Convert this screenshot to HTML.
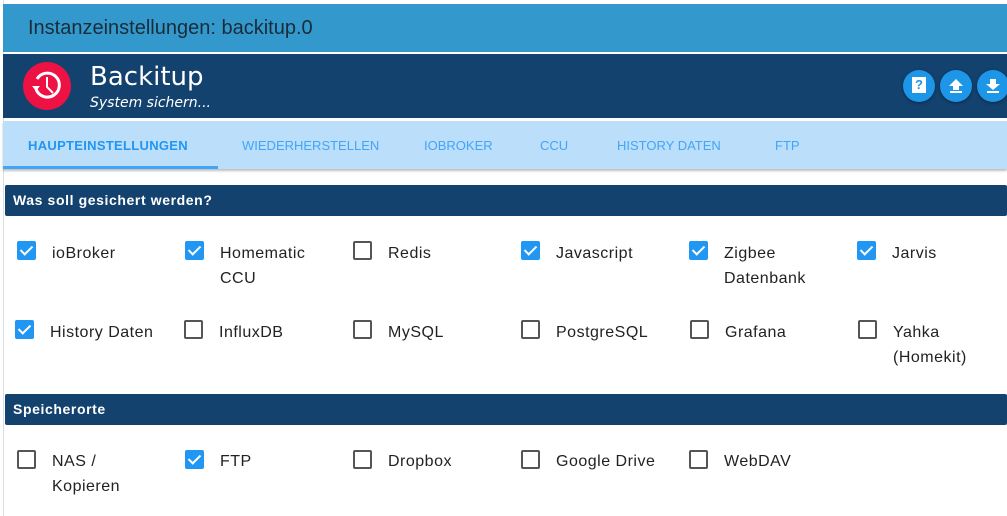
<!DOCTYPE html>
<html><head><meta charset="utf-8"><style>
*{margin:0;padding:0;box-sizing:border-box}
body{width:1007px;height:516px;overflow:hidden;background:#fff;font-family:"Liberation Sans",sans-serif;position:relative}
.a{position:absolute}
.top{left:3px;top:4px;width:1004px;height:48px;background:#3399cc;color:#1a2b3a;font-size:20px;padding:13px 0 0 25px}
.hdr{left:3px;top:54px;width:1004px;height:64px;background:#13426f}
.tabs{left:3px;top:121px;width:1004px;height:48px;background:#bbdefb;box-shadow:0 2px 2px rgba(0,0,0,.25)}
.tab{position:absolute;top:17px;font-size:13px;color:#42a5f5;letter-spacing:0}
.sec{left:5px;width:1002px;height:31px;background:#13426f;color:#fff;font-weight:bold;font-size:14px;padding:7px 0 0 8px;letter-spacing:.6px;border-radius:2px}
.cb{position:absolute;width:19px;height:19px;border-radius:2px}
.on{background:#2196f3}
.on::after{content:"";position:absolute;left:6px;top:2px;width:5px;height:10px;border:solid #fff;border-width:0 2px 2px 0;transform:rotate(45deg)}
.off{border:2px solid #555}
.lb{position:absolute;font-size:16px;color:#222;line-height:25px;letter-spacing:.5px;margin-top:2px}
.btn{position:absolute;top:70px;width:32px;height:32px;border-radius:50%;background:#1e96e8;box-shadow:0 1px 3px rgba(0,0,0,.4)}
</style></head><body>
<div class="a" style="left:3px;top:0;width:1px;height:516px;background:#ddd"></div>
<div class="a top">Instanzeinstellungen: backitup.0</div>
<div class="a hdr"></div>
<svg class="a" style="left:23px;top:62px" width="48" height="48" viewBox="0 0 48 48">
<circle cx="24" cy="24" r="24" fill="#ee1144"/>
<path d="M13 27 A12 12 0 1 0 14 17" fill="none" stroke="#fff" stroke-width="3"/>
<path d="M9 24 L17 24 L13 29 Z" fill="#fff"/>
<path d="M24 15 V25 L30 31" fill="none" stroke="#fff" stroke-width="2"/>
</svg>
<div class="a" style="left:90px;top:62px;color:#fff;font-family:'DejaVu Sans',sans-serif;font-size:26px">Backitup</div>
<div class="a" style="left:90px;top:95px;color:#fff;font-family:'DejaVu Sans',sans-serif;font-style:italic;font-size:14px">System sichern...</div>
<div class="btn" style="left:903px"><div class="a" style="left:9px;top:7px;width:14px;height:16px;background:#fff;color:#1e96e8;font-weight:bold;font-size:13px;text-align:center;line-height:16px">?</div></div>
<div class="btn" style="left:940px"><svg class="a" style="left:8px;top:8px" width="16" height="16"><path d="M8 1 L15 8 H11 V12 H5 V8 H1 Z" fill="#fff"/><rect x="2" y="13" width="12" height="2" fill="#fff"/></svg></div>
<div class="btn" style="left:977px"><svg class="a" style="left:8px;top:8px" width="16" height="16"><path d="M5 1 H11 V6 H15 L8 12 L1 6 H5 Z" fill="#fff"/><rect x="2" y="13" width="12" height="2" fill="#fff"/></svg></div>
<div class="a tabs">
<div class="tab" style="left:25px;font-weight:bold;color:#2196f3;letter-spacing:.3px">HAUPTEINSTELLUNGEN</div>
<div class="a" style="left:0;top:45px;width:215px;height:3px;background:#42a5f5"></div>
<div class="tab" style="left:239px">WIEDERHERSTELLEN</div>
<div class="tab" style="left:421px">IOBROKER</div>
<div class="tab" style="left:537px">CCU</div>
<div class="tab" style="left:614px">HISTORY DATEN</div>
<div class="tab" style="left:772px">FTP</div>
</div>
<div class="a sec" style="top:185px">Was soll gesichert werden?</div>
<div class="a sec" style="top:394px">Speicherorte</div>

<div class="cb on" style="left:17px;top:241px"></div><div class="lb" style="left:52px;top:239px">ioBroker</div>
<div class="cb on" style="left:185px;top:241px"></div><div class="lb" style="left:220px;top:239px">Homematic<br>CCU</div>
<div class="cb off" style="left:353px;top:241px"></div><div class="lb" style="left:388px;top:239px">Redis</div>
<div class="cb on" style="left:521px;top:241px"></div><div class="lb" style="left:556px;top:239px">Javascript</div>
<div class="cb on" style="left:689px;top:241px"></div><div class="lb" style="left:724px;top:239px">Zigbee<br>Datenbank</div>
<div class="cb on" style="left:857px;top:241px"></div><div class="lb" style="left:892px;top:239px">Jarvis</div>

<div class="cb on" style="left:15px;top:320px"></div><div class="lb" style="left:50px;top:318px">History Daten</div>
<div class="cb off" style="left:184px;top:320px"></div><div class="lb" style="left:219px;top:318px">InfluxDB</div>
<div class="cb off" style="left:353px;top:320px"></div><div class="lb" style="left:388px;top:318px">MySQL</div>
<div class="cb off" style="left:521px;top:320px"></div><div class="lb" style="left:556px;top:318px">PostgreSQL</div>
<div class="cb off" style="left:690px;top:320px"></div><div class="lb" style="left:725px;top:318px">Grafana</div>
<div class="cb off" style="left:858px;top:320px"></div><div class="lb" style="left:893px;top:318px">Yahka<br>(Homekit)</div>

<div class="cb off" style="left:17px;top:450px"></div><div class="lb" style="left:52px;top:447px">NAS /<br>Kopieren</div>
<div class="cb on" style="left:185px;top:450px"></div><div class="lb" style="left:220px;top:447px">FTP</div>
<div class="cb off" style="left:353px;top:450px"></div><div class="lb" style="left:388px;top:447px">Dropbox</div>
<div class="cb off" style="left:521px;top:450px"></div><div class="lb" style="left:556px;top:447px">Google Drive</div>
<div class="cb off" style="left:689px;top:450px"></div><div class="lb" style="left:724px;top:447px">WebDAV</div>
</body></html>
